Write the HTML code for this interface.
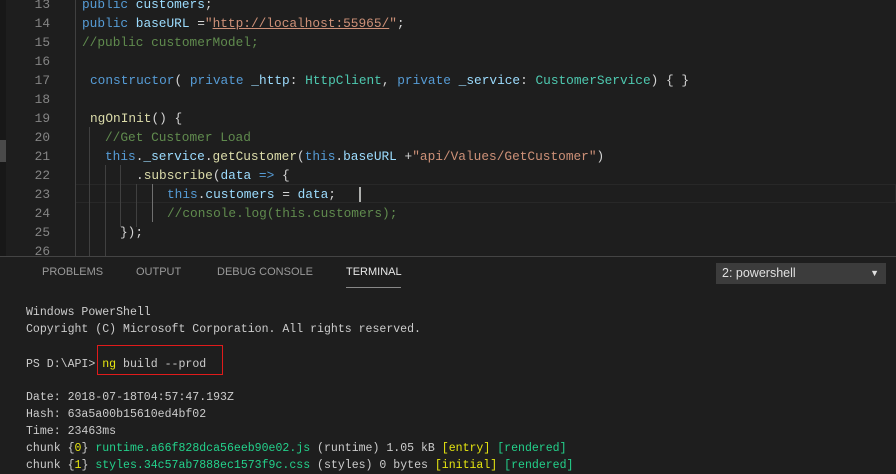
<!DOCTYPE html>
<html><head><meta charset="utf-8"><style>
*{margin:0;padding:0;box-sizing:border-box}
body{width:896px;height:470px;overflow:hidden;background:#1e1e1e;position:relative;font-family:"Liberation Mono",monospace}
.ln{position:absolute;left:0;width:50px;text-align:right;color:#858585;font-size:12.8px;line-height:19px}
.c{position:absolute;white-space:pre;font-size:12.8px;line-height:19px;color:#d4d4d4}
.k{color:#569cd6}.v{color:#9cdcfe}.s{color:#ce9178}.m{color:#608b4e}.t{color:#4ec9b0}.f{color:#dcdcaa}
.g{position:absolute;width:1px;background:#404040}
.t2{position:absolute;left:26px;white-space:pre;font-size:11.55px;line-height:17px;color:#cccccc}
.gr{color:#23d18b}.y{color:#e5e510}
.tab{position:absolute;top:266px;font-family:"Liberation Sans",sans-serif;font-size:11px;color:#9a9a9a}
</style></head><body>
<div style="position:absolute;left:0;top:0;width:6px;height:256px;background:#181818"></div>
<div style="position:absolute;left:0;top:140px;width:6px;height:22px;background:#4a4a4a"></div>
<div style="position:absolute;left:75px;top:184px;width:821px;height:19px;border:1px solid #282828"></div>
<div class="g" style="left:75px;top:0;height:256px"></div>
<div class="g" style="left:89px;top:127px;height:129px"></div>
<div class="g" style="left:105px;top:165px;height:91px"></div>
<div class="g" style="left:120px;top:165px;height:62px"></div>
<div class="g" style="left:136px;top:184px;height:43px"></div>
<div class="g" style="left:152px;top:184px;height:38px;background:#707070"></div>

<div class="ln" style="top:-5px">13</div><div class="c" style="left:82px;top:-5px"><span class="k">public</span> <span class="v">customers</span>;</div>
<div class="ln" style="top:14px">14</div><div class="c" style="left:82px;top:14px"><span class="k">public</span> <span class="v">baseURL</span> =<span class="s">"<u style="text-decoration-color:#ce9178">http://localhost:55965/</u>"</span>;</div>
<div class="ln" style="top:33px">15</div><div class="c m" style="left:82px;top:33px">//public customerModel;</div>
<div class="ln" style="top:52px">16</div>
<div class="ln" style="top:71px">17</div><div class="c" style="left:90px;top:71px"><span class="k">constructor</span>( <span class="k">private</span> <span class="v">_http</span>: <span class="t">HttpClient</span>, <span class="k">private</span> <span class="v">_service</span>: <span class="t">CustomerService</span>) { }</div>
<div class="ln" style="top:90px">18</div>
<div class="ln" style="top:109px">19</div><div class="c" style="left:90px;top:109px"><span class="f">ngOnInit</span>() {</div>
<div class="ln" style="top:128px">20</div><div class="c m" style="left:105px;top:128px">//Get Customer Load</div>
<div class="ln" style="top:147px">21</div><div class="c" style="left:105px;top:147px"><span class="k">this</span>.<span class="v">_service</span>.<span class="f">getCustomer</span>(<span class="k">this</span>.<span class="v">baseURL</span> +<span class="s">"api/Values/GetCustomer"</span>)</div>
<div class="ln" style="top:166px">22</div><div class="c" style="left:136px;top:166px">.<span class="f">subscribe</span>(<span class="v">data</span> <span class="k">=&gt;</span> {</div>
<div class="ln" style="top:185px">23</div><div class="c" style="left:167px;top:185px"><span class="k">this</span>.<span class="v">customers</span> = <span class="v">data</span>;</div>
<div style="position:absolute;left:359px;top:187px;width:2px;height:15px;background:#aeafad"></div>
<div class="ln" style="top:204px">24</div><div class="c m" style="left:167px;top:204px">//console.log(this.customers);</div>
<div class="ln" style="top:223px">25</div><div class="c" style="left:120px;top:223px">});</div>
<div class="ln" style="top:242px">26</div>

<div style="position:absolute;left:0;top:256px;width:896px;height:214px;background:#1e1e1e;border-top:1px solid #444"></div>
<div class="tab" style="left:42px">PROBLEMS</div>
<div class="tab" style="left:136px">OUTPUT</div>
<div class="tab" style="left:217px">DEBUG CONSOLE</div>
<div class="tab" style="left:346px;color:#e7e7e7">TERMINAL</div>
<div style="position:absolute;left:346px;top:287px;width:55px;height:1px;background:#888"></div>
<div style="position:absolute;left:716px;top:263px;width:170px;height:21px;background:#3c3c3c;font-family:'Liberation Sans',sans-serif;font-size:12.5px;color:#e0e0e0;padding:3px 6px;line-height:15px">2: powershell<span style="position:absolute;right:7px;top:3px;font-size:9px">▼</span></div>

<div class="t2" style="top:304px">Windows PowerShell</div>
<div class="t2" style="top:321px">Copyright (C) Microsoft Corporation. All rights reserved.</div>
<div class="t2" style="top:356px">PS D:\API&gt; <span class="y">ng</span> build --prod</div>
<div style="position:absolute;left:97px;top:345px;width:126px;height:30px;border:1px solid #e01b1b"></div>
<div class="t2" style="top:389px">Date: 2018-07-18T04:57:47.193Z</div>
<div class="t2" style="top:406px">Hash: 63a5a00b15610ed4bf02</div>
<div class="t2" style="top:423px">Time: 23463ms</div>
<div class="t2" style="top:440px">chunk {<span class="y">0</span>} <span class="gr">runtime.a66f828dca56eeb90e02.js</span> (runtime) 1.05 kB <span class="y">[entry]</span> <span class="gr">[rendered]</span></div>
<div class="t2" style="top:457px">chunk {<span class="y">1</span>} <span class="gr">styles.34c57ab7888ec1573f9c.css</span> (styles) 0 bytes <span class="y">[initial]</span> <span class="gr">[rendered]</span></div>
</body></html>
